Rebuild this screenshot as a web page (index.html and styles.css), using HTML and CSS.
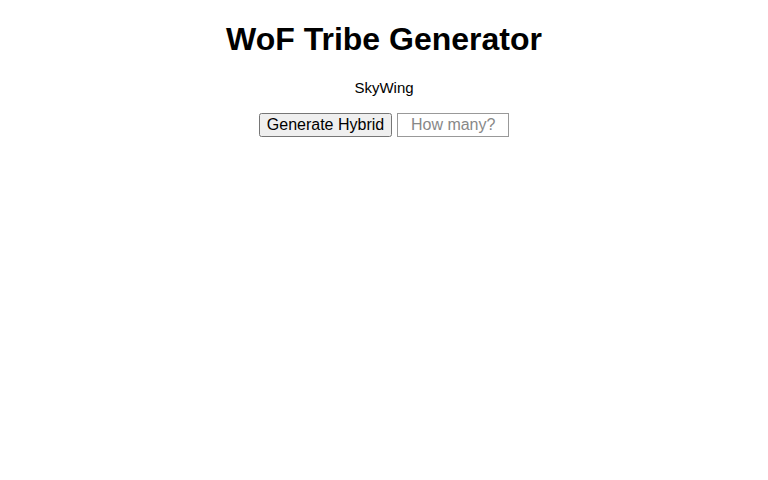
FILE: index.html
```html
<!DOCTYPE html>
<html lang="en">
<head>
  <meta charset="UTF-8">
  <meta name="viewport" content="width=device-width, initial-scale=1.0">
  <title>WoF Tribe Generator</title>
  <link rel="stylesheet" href="styles.css">
</head>
<body>
  <h1>WoF Tribe Generator</h1>

  <p id="result" class="result">SkyWing</p>

  <div class="controls">
    <button id="generate">Generate Hybrid</button>
    <input id="count" type="text" placeholder="How many?">
  </div>
</body>
</html>
```

FILE: styles.css
```css
body {
  font-family: "Liberation Sans", Arial, sans-serif;
  text-align: center;
  margin: 0;
  padding: 0;
}
h1 {
  font-size: 32px;
  margin: 21px 0;
}
.result {
  font-size: 15px;
  margin: 15px 0 17px;
}
.controls {
  display: flex;
  justify-content: center;
  gap: 5px;
}
button {
  font-family: "Liberation Sans", Arial, sans-serif;
  font-size: 16px;
  padding: 1px 6px;
}
input {
  font-family: "Liberation Sans", Arial, sans-serif;
  font-size: 16px;
  width: 106px;
  text-align: center;
  padding: 1px 2px;
  border: 1px solid #999;
}
input::placeholder {
  color: #888;
}
```
